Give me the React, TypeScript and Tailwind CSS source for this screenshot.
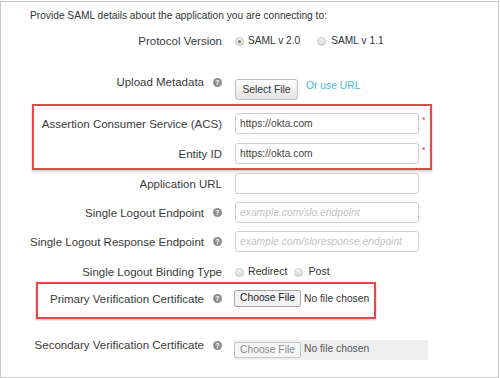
import React from 'react';

const Help = () => (
  <svg width="9" height="9" viewBox="0 0 9 9" className="shrink-0">
    <circle cx="4.5" cy="4.5" r="4.5" fill="#8e8e8e" />
    <text
      x="4.5"
      y="7.3"
      textAnchor="middle"
      fontSize="7"
      fontWeight="bold"
      fill="#ffffff"
      fontFamily="'Liberation Sans', Arial, sans-serif"
    >
      ?
    </text>
  </svg>
);

const Radio = ({ checked }: { checked?: boolean }) => (
  <span className="inline-flex h-[9px] w-[9px] shrink-0 items-center justify-center rounded-full border border-[#c6c6c6] bg-gradient-to-b from-[#f4f4f4] to-[#d9d9d9]">
    {checked && <span className="h-[3px] w-[3px] rounded-full bg-[#7a7a7a]" />}
  </span>
);

interface RowProps {
  label: string;
  help?: boolean;
  className?: string;
  top?: boolean;
  children?: React.ReactNode;
}

const Row: React.FC<RowProps> = ({ label, help, className = '', top, children }) => (
  <div className={`flex ${top ? 'items-start' : 'items-center'} ${className}`}>
    <div className="flex h-[14px] w-[221px] shrink-0 items-center justify-end gap-[9px] text-[11.5px] leading-[14px] text-[#3a3a3a]">
      <span className="whitespace-nowrap">{label}</span>
      {help && <Help />}
    </div>
    <div className="ml-[13px] flex items-center">{children}</div>
  </div>
);

const TextInput = ({ value, placeholder }: { value?: string; placeholder?: string }) => (
  <input
    readOnly
    defaultValue={value}
    placeholder={placeholder}
    className="h-[21px] w-[184px] rounded-[3px] border border-[#cfcfcf] bg-white px-[4px] text-[10.3px] text-[#444] outline-none placeholder:italic placeholder:text-[#c4c4c4]"
  />
);

const Required = () => <span className="mb-[7px] ml-[3px] text-[9px] leading-none text-[#e23b3b]">*</span>;

export default function App() {
  return (
    <div className="relative h-[378px] w-[500px] bg-white font-['Liberation_Sans',Arial,sans-serif]">
      <div className="mt-px h-[377px] w-[499px] border border-[#c8c8c8]">
        <p className="pl-[29px] pt-[7px] text-[10.2px] leading-[14px] text-[#333]">
          Provide SAML details about the application you are connecting to:
        </p>

        <Row label="Protocol Version" className="mt-[8px] h-[20px]">
          <Radio checked />
          <span className="ml-[4px] text-[10.2px] text-[#333]">SAML v 2.0</span>
          <span className="ml-[17px]">
            <Radio />
          </span>
          <span className="ml-[5px] text-[10.2px] text-[#333]">SAML v 1.1</span>
        </Row>

        <Row label="Upload Metadata" help top className="mt-[24px]">
          <div className="mt-[4px] flex items-start">
            <button className="h-[21px] w-[63px] rounded-[3px] border border-[#bdbdbd] bg-gradient-to-b from-white to-[#e4e4e4] text-[10.3px] text-[#333]">
              Select File
            </button>
            <span className="ml-[8px] text-[10.3px] leading-[14px] text-[#4fb6d1]">Or use URL</span>
          </div>
        </Row>

        <Row label="Assertion Consumer Service (ACS)" className="mt-[13px] h-[21px]">
          <TextInput value="https://okta.com" />
          <Required />
        </Row>
        <Row label="Entity ID" className="mt-[9px] h-[21px]">
          <TextInput value="https://okta.com" />
          <Required />
        </Row>
        <Row label="Application URL" className="mt-[9px] h-[21px]">
          <TextInput />
        </Row>
        <Row label="Single Logout Endpoint" help className="mt-[8px] h-[21px]">
          <TextInput placeholder="example.com/slo.endpoint" />
        </Row>
        <Row label="Single Logout Response Endpoint" help className="mt-[8px] h-[21px]">
          <TextInput placeholder="example.com/sloresponse.endpoint" />
        </Row>

        <Row label="Single Logout Binding Type" className="mt-[10px] h-[20px]">
          <Radio />
          <span className="ml-[4px] text-[10.6px] text-[#333]">Redirect</span>
          <span className="ml-[7px]">
            <Radio />
          </span>
          <span className="ml-[5px] text-[10.6px] text-[#333]">Post</span>
        </Row>

        <Row label="Primary Verification Certificate" help className="mt-[8px] h-[17px]">
          <div className="-ml-px flex items-center">
            <button className="h-[17px] rounded-[2px] border border-[#a9a9a9] bg-[#f2f2f2] px-[5px] text-[10.3px] leading-none text-[#222]">
              Choose File
            </button>
            <span className="ml-[3px] text-[10.3px] text-[#333]">No file chosen</span>
          </div>
        </Row>

        <Row label="Secondary Verification Certificate" help top className="mt-[31px]">
          <div className="-ml-px mt-[2px] flex h-[20px] w-[194px] items-center bg-[#efefef]">
            <button className="h-[16px] rounded-[2px] border border-[#c4c4c4] bg-[#f6f6f6] px-[5px] text-[10.3px] leading-none text-[#8a8a8a]">
              Choose File
            </button>
            <span className="mb-[3px] ml-[3px] text-[10.3px] text-[#555]">No file chosen</span>
          </div>
        </Row>
      </div>

      {/* annotation boxes */}
      <div className="pointer-events-none absolute left-[32px] top-[103px] h-[66px] w-[400px] border-2 border-[#e8464b] shadow-[0_1px_2px_rgba(0,0,0,0.25)]" />
      <div className="pointer-events-none absolute left-[36px] top-[281px] h-[37px] w-[340px] border-2 border-[#e8464b] shadow-[0_1px_2px_rgba(0,0,0,0.25)]" />
    </div>
  );
}
